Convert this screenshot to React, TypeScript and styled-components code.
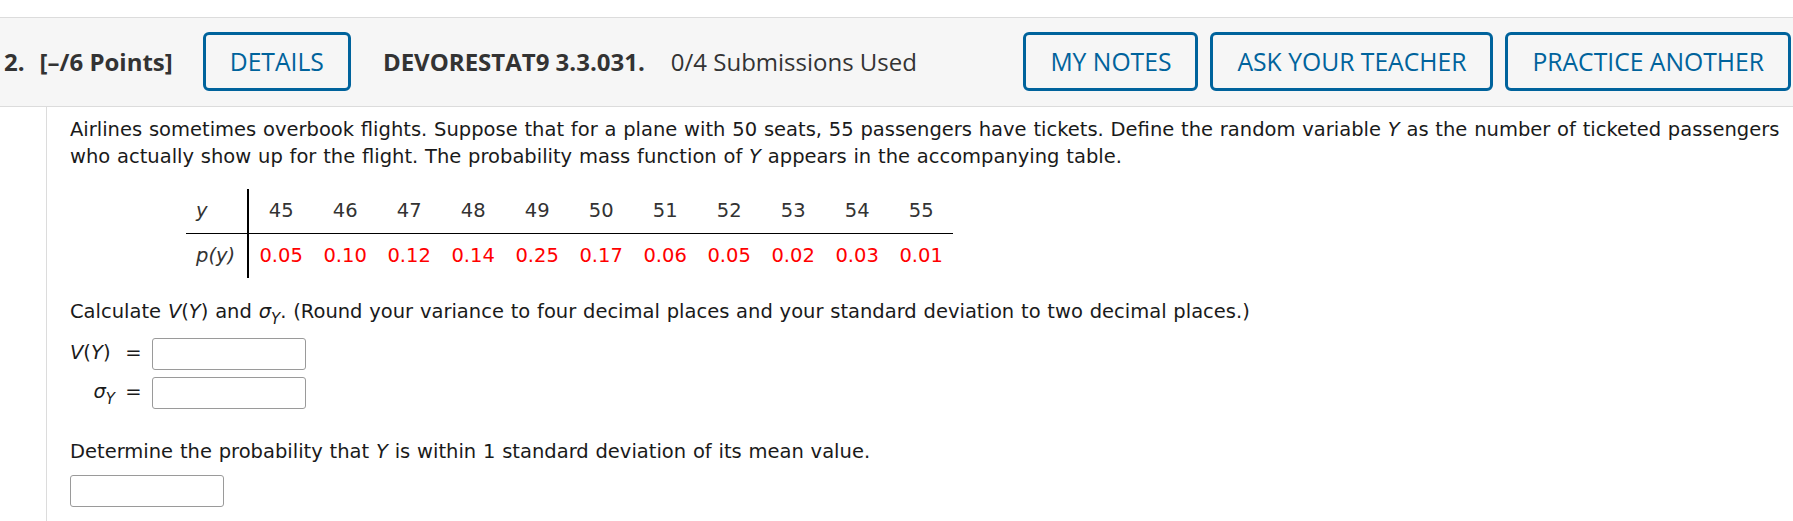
import styled, { createGlobalStyle } from "styled-components";

const GlobalStyle = createGlobalStyle`
  html, body {
    margin: 0;
    padding: 0;
    background: #fff;
  }
  body {
    font-family: "DejaVu Sans", Verdana, sans-serif;
  }
`;

const Page = styled.div`
  padding-top: 17px;
`;

const Header = styled.div`
  display: flex;
  align-items: center;
  padding: 14px 2px 15px 4px;
  background: #f6f6f6;
  border-top: 1px solid #dcdcdc;
  border-bottom: 1px solid #dcdcdc;
  font-family: "Open Sans", "Liberation Sans", sans-serif;
  font-size: 24px;
  color: #333;
  white-space: nowrap;
`;

const HeaderText = styled.span<{ $bold?: boolean; $gap?: number }>`
  font-weight: ${(p) => (p.$bold ? 700 : 400)};
  margin-left: ${(p) => p.$gap ?? 0}px;
`;

const OutlineButton = styled.button<{ $gap?: number }>`
  height: 59px;
  padding: 0 24px;
  margin-left: ${(p) => p.$gap ?? 0}px;
  border: 3px solid #00639c;
  border-radius: 6px;
  background: transparent;
  color: #00639c;
  font-family: "Open Sans", "Liberation Sans", sans-serif;
  font-size: 24.7px;
  text-transform: uppercase;
  cursor: pointer;
`;

const ButtonGroup = styled.div`
  display: flex;
  margin-left: auto;
  gap: 12px;
`;

const Body = styled.div`
  margin-left: 46px;
  border-left: 1px solid #dcdcdc;
  padding: 10px 0 14px 23px;
  font-size: 19.5px;
  word-spacing: 0.6px;
  line-height: 26.6px;
  color: #1a1a1a;
`;

const Para = styled.p<{ $top?: number }>`
  margin: ${(p) => p.$top ?? 0}px 0 0 0;
`;

const PmfTable = styled.table`
  margin: 19px 0 0 116px;
  border-collapse: collapse;
  color: #333;
`;

const LabelCell = styled.td<{ $head?: boolean }>`
  height: 44px;
  padding: 0 12px 0 10px;
  border-right: 2px solid #000;
  border-bottom: ${(p) => (p.$head ? "1px solid #000" : "none")};
  font-style: italic;
  text-align: left;
`;

const ValueCell = styled.td<{ $head?: boolean }>`
  width: 64px;
  height: 44px;
  padding: 0;
  text-align: center;
  color: ${(p) => (p.$head ? "#333" : "#ff0000")};
  border-bottom: ${(p) => (p.$head ? "1px solid #000" : "none")};
`;

const AnswerGrid = styled.div`
  display: grid;
  grid-template-columns: 45px 37px 154px;
  row-gap: 7px;
  align-items: center;
  margin-top: 12px;
`;

const AnswerLabel = styled.span<{ $pad?: number }>`
  text-align: right;
  white-space: nowrap;
  padding-right: ${(p) => p.$pad ?? 0}px;
`;

const Equals = styled.span`
  text-align: center;
`;

const AnswerInput = styled.input`
  box-sizing: border-box;
  width: 154px;
  height: 32px;
  margin: 0;
  border: 1px solid #9a9a9a;
  border-radius: 3px;
  background: #fff;
`;

const SoloInput = styled(AnswerInput)`
  display: block;
  margin-top: 10px;
`;

const Sub = styled.sub`
  font-size: 15px;
  font-style: italic;
  vertical-align: -6px;
  line-height: 0;
`;

const ys = [45, 46, 47, 48, 49, 50, 51, 52, 53, 54, 55];
const ps = ["0.05", "0.10", "0.12", "0.14", "0.25", "0.17", "0.06", "0.05", "0.02", "0.03", "0.01"];

export default function App() {
  return (
    <Page>
      <GlobalStyle />
      <Header>
        <HeaderText $bold>2.</HeaderText>
        <HeaderText $bold $gap={15}>[–/6 Points]</HeaderText>
        <OutlineButton $gap={30}>Details</OutlineButton>
        <HeaderText $bold $gap={32}>DEVORESTAT9 3.3.031.</HeaderText>
        <HeaderText $gap={26}>0/4 Submissions Used</HeaderText>
        <ButtonGroup>
          <OutlineButton>My Notes</OutlineButton>
          <OutlineButton>Ask Your Teacher</OutlineButton>
          <OutlineButton>Practice Another</OutlineButton>
        </ButtonGroup>
      </Header>
      <Body>
        <Para>
          Airlines sometimes overbook flights. Suppose that for a plane with 50 seats, 55 passengers have
          tickets. Define the random variable <i>Y</i> as the number of ticketed passengers who actually show
          up for the flight. The probability mass function of <i>Y</i> appears in the accompanying table.
        </Para>
        <PmfTable>
          <tbody>
            <tr>
              <LabelCell $head>y</LabelCell>
              {ys.map((y) => (
                <ValueCell key={y} $head>
                  {y}
                </ValueCell>
              ))}
            </tr>
            <tr>
              <LabelCell>p(y)</LabelCell>
              {ps.map((p, i) => (
                <ValueCell key={i}>{p}</ValueCell>
              ))}
            </tr>
          </tbody>
        </PmfTable>
        <Para $top={21}>
          Calculate <i>V</i>(<i>Y</i>) and <i>σ</i>
          <Sub>Y</Sub>. (Round your variance to four decimal places and your standard deviation to two
          decimal places.)
        </Para>
        <AnswerGrid>
          <AnswerLabel $pad={5}>
            <i>V</i>(<i>Y</i>)
          </AnswerLabel>
          <Equals>=</Equals>
          <AnswerInput type="text" />
          <AnswerLabel>
            <i>σ</i>
            <Sub>Y</Sub>
          </AnswerLabel>
          <Equals>=</Equals>
          <AnswerInput type="text" />
        </AnswerGrid>
        <Para $top={30}>
          Determine the probability that <i>Y</i> is within 1 standard deviation of its mean value.
        </Para>
        <SoloInput type="text" />
      </Body>
    </Page>
  );
}
